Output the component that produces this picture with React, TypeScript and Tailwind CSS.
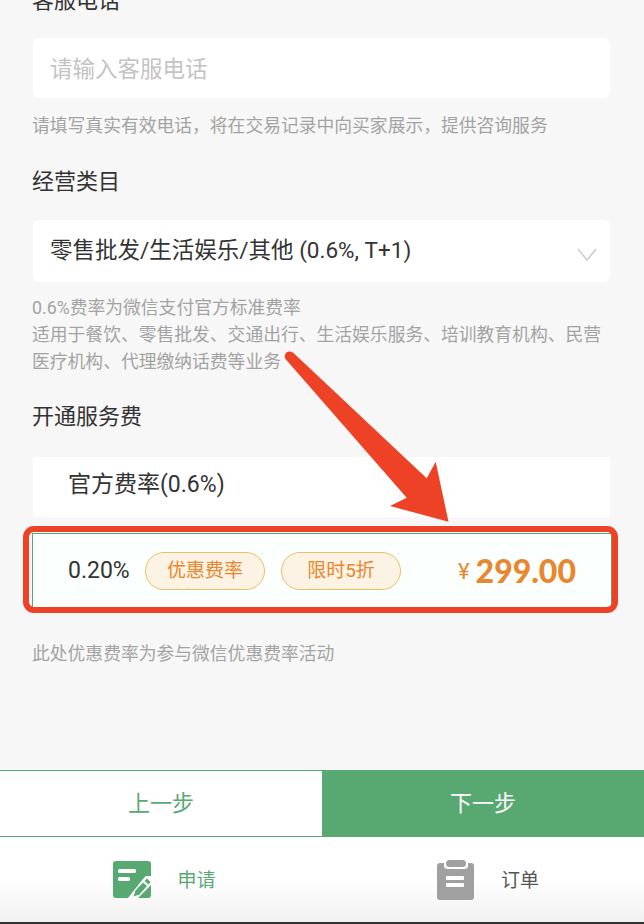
const fontStack = "font-['Roboto','Noto_Sans_CJK_SC',sans-serif]";

function ApplyIcon() {
  return (
    <svg width="38" height="38" viewBox="0 0 38 38" className="shrink-0">
      <rect x="0" y="0" width="38" height="37" rx="3" fill="#58a872" />
      <rect x="5" y="8" width="18" height="4" rx="1.5" fill="#fff" />
      <rect x="5" y="16" width="12" height="4" rx="1.5" fill="#fff" />
      <path d="M15 37 L30 18 L33 15 L38 15 L38 24 L25 37 Z" fill="#fff" />
      <path d="M20.5 35.5 L22.5 29.5 L30 21.5 L34 25 L26.5 33.5 Z" fill="#58a872" />
      <path d="M31.5 20 L34 17.5 L37.5 21 L35.5 23.5 Z" fill="#58a872" />
    </svg>
  );
}

function OrderIcon() {
  return (
    <svg width="38" height="40" viewBox="0 0 38 40" className="shrink-0">
      <path d="M3 3 H7 V6 Q7 9 11 9 H27 Q31 9 31 6 V3 H34 Q37 3 37 6 V37 Q37 40 34 40 H3 Q0 40 0 37 V6 Q0 3 3 3 Z" fill="#a0a0a0" />
      <rect x="9" y="0" width="20" height="7" rx="3.5" fill="#a0a0a0" />
      <rect x="9" y="16" width="18" height="4" rx="1" fill="#fff" />
      <rect x="9" y="23" width="18" height="4" rx="1" fill="#fff" />
    </svg>
  );
}

function Pill({ label }: { label: string }) {
  return (
    <span className="flex h-[38px] w-[120px] items-center justify-center rounded-[19px] border border-[#e9c164] bg-[#fdf3e4] text-[19px] text-[#e8872e]">
      {label}
    </span>
  );
}

function Hint({ children, className }: { children: React.ReactNode; className?: string }) {
  return <p className={`text-[17.8px] leading-[27px] text-[#a3a3a3] ${className ?? ''}`}>{children}</p>;
}

export default function App() {
  return (
    <div className={`relative flex h-[924px] w-[644px] flex-col overflow-hidden bg-[#f7f7f7] ${fontStack}`}>
      <div className="flex-1 px-[32px]">
        <h2 className="-mt-[14px] text-[22px] leading-[30px] text-[#333]">客服电话</h2>

        <div className="ml-[1px] mr-[2px] mt-[22px] flex h-[60px] items-center rounded-[6px] bg-white px-[17px] pt-[3px] text-[22.5px] text-[#c4c4c4]">
          请输入客服电话
        </div>
        <Hint className="mt-[14px]">请填写真实有效电话，将在交易记录中向买家展示，提供咨询服务</Hint>

        <h2 className="mt-[28px] text-[22px] leading-[30px] text-[#333]">经营类目</h2>
        <div className="ml-[1px] mr-[2px] mt-[23px] flex h-[62px] items-center justify-between rounded-[6px] bg-white pl-[17px] pr-[13px] text-[22.5px] text-[#333]">
          <span>零售批发/生活娱乐/其他 (0.6%, T+1)</span>
          <svg width="20" height="13" viewBox="0 0 20 13" fill="none" className="mt-[6px]">
            <path d="M1 1 L10 12 L19 1" stroke="#cbcbcb" strokeWidth="1.5" />
          </svg>
        </div>
        <div className="mt-[12px]">
          <Hint>0.6%费率为微信支付官方标准费率</Hint>
          <Hint>适用于餐饮、零售批发、交通出行、生活娱乐服务、培训教育机构、民营</Hint>
          <Hint>医疗机构、代理缴纳话费等业务</Hint>
        </div>

        <h2 className="mt-[27px] text-[22px] leading-[30px] text-[#333]">开通服务费</h2>
        <div className="ml-[1px] mr-[2px] mt-[25px] flex h-[60px] items-center bg-white pb-[4px] pl-[35px] text-[23px] text-[#333]">官方费率(0.6%)</div>

        <div className="relative mt-[16px] flex h-[75px] items-center border border-b-0 border-[#58a872] bg-[#fbfffe] pl-[35px] pr-[35px]">
          <span className="w-[77px] text-[23px] text-[#333]">0.20%</span>
          <div className="flex gap-[16px]">
            <Pill label="优惠费率" />
            <Pill label="限时5折" />
          </div>
          <div className="ml-auto flex items-center text-[#e8872e]">
            <span className="mr-[6px] text-[22px]">¥</span>
            <span className="font-['Lato'] text-[32px] font-black leading-none">299.00</span>
          </div>
          {/* red annotation frame */}
          <div className="absolute -bottom-[5px] -left-[10px] -right-[7px] -top-[8px] rounded-[11px] border-[6px] border-[#ee4226]" />
        </div>

        <Hint className="mt-[32px]">此处优惠费率为参与微信优惠费率活动</Hint>
      </div>

      <div className="flex h-[67px] border-y border-[#58a872] bg-white text-[22px]">
        <button className="flex-1 text-[#58a872]">上一步</button>
        <button className="w-[322px] bg-[#58a872] text-white">下一步</button>
      </div>

      <div className="flex h-[85px] bg-gradient-to-b from-white from-50% to-[#f1f1f1]">
        <div className="flex w-[322px] items-center justify-center gap-[26px] pl-[7px] text-[19px] text-[#58a872]">
          <ApplyIcon />
          <span className="pt-[3px]">申请</span>
        </div>
        <div className="flex w-[322px] items-center justify-center gap-[26px] pl-[10px] text-[19px] text-[#555]">
          <OrderIcon />
          <span className="pt-[3px]">订单</span>
        </div>
      </div>
      <div className="h-[2px] bg-[#333]" />

      {/* red annotation arrow */}
      <svg className="absolute left-0 top-0" width="644" height="924" viewBox="0 0 644 924">
        <path
          d="M285.5 359 Q283.5 355 286.5 352.5 Q290 350.5 293.5 353 L426.7 478.3 L435.7 461.7 L448.5 521.7 L390 506 L406.7 497.7 Z"
          fill="#ee4226"
        />
      </svg>
    </div>
  );
}
